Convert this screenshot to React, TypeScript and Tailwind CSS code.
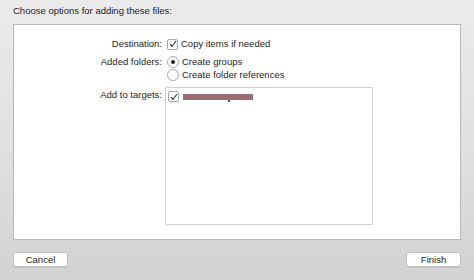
import React from 'react';

// ============================================
// Small controls
// ============================================

function CheckBox() {
  return (
    <span className="flex h-[11px] w-[11px] items-center justify-center rounded-[2px] border border-[#a9a9a9] bg-white shadow-[0_1px_0_rgba(0,0,0,0.05)]">
      <svg width="8" height="8" viewBox="0 0 8 8" fill="none">
        <path d="M1.2 4.3 L3.1 6.3 L6.8 1.2" stroke="#333" strokeWidth="1.1" strokeLinecap="round" strokeLinejoin="round" />
      </svg>
    </span>
  );
}

function Radio({ checked }: { checked?: boolean }) {
  return (
    <span className="flex h-[12px] w-[12px] items-center justify-center rounded-full border border-[#a9a9a9] bg-white">
      {checked && <span className="h-[4px] w-[4px] rounded-full bg-[#222]" />}
    </span>
  );
}

function MacButton({ label }: { label: string }) {
  return (
    <button className="flex h-[15px] w-[55px] items-center justify-center rounded-[3px] border border-[#c2c2c2] bg-white text-[9.5px] leading-none text-[#222] shadow-[0_1px_0_rgba(0,0,0,0.08)]">
      {label}
    </button>
  );
}

// ============================================
// Sheet
// ============================================

export default function App() {
  return (
    <div
      className="flex h-[280px] w-[474px] flex-col bg-gradient-to-b from-[#ebebeb] via-[#e1e1e1] to-[#d2d2d2] text-[9.5px] text-[#1e1e1e]"
      style={{ fontFamily: '"Helvetica Neue", "Liberation Sans", Arial, sans-serif' }}
    >
      {/* Header */}
      <div className="flex h-[24px] items-center pl-[13px] pb-[1px]">
        Choose options for adding these files:
      </div>

      {/* Options panel */}
      <div className="mx-[13px] h-[216px] w-[448px] border border-[#b9b9b9] bg-white">
        <div className="grid grid-cols-[148px_1fr] gap-x-[3px] pt-[13px]">
          <div className="flex h-[12px] items-center justify-end">Destination:</div>
          <div className="flex h-[12px] items-center gap-[3px] pl-[2px]">
            <CheckBox />
            <span>Copy items if needed</span>
          </div>

          <div className="mt-[6px] flex h-[12px] items-center justify-end">Added folders:</div>
          <div className="mt-[6px] flex flex-col gap-[1px] pl-[2px]">
            <div className="flex h-[12px] items-center gap-[3px]">
              <Radio checked />
              <span>Create groups</span>
            </div>
            <div className="flex h-[12px] items-center gap-[3px]">
              <Radio />
              <span>Create folder references</span>
            </div>
          </div>

          <div className="mt-[7px] flex h-[12px] items-center justify-end pt-[2px]">Add to targets:</div>
          <div className="mt-[6px] h-[138px] w-[208px] border border-[#d0d0d0] bg-white">
            <div className="flex items-center gap-[4px] pl-[2px] pt-[3px]">
              <CheckBox />
              <span className="relative block h-[6px] w-[70px] border border-[#7e7e7e] bg-[#a9656d]">
                <span className="absolute left-[44px] top-[5px] h-[2px] w-[2px] bg-[#555]" />
              </span>
            </div>
          </div>
        </div>
      </div>

      {/* Footer buttons */}
      <div className="flex justify-between px-[13px] pt-[12px]">
        <MacButton label="Cancel" />
        <MacButton label="Finish" />
      </div>
    </div>
  );
}
